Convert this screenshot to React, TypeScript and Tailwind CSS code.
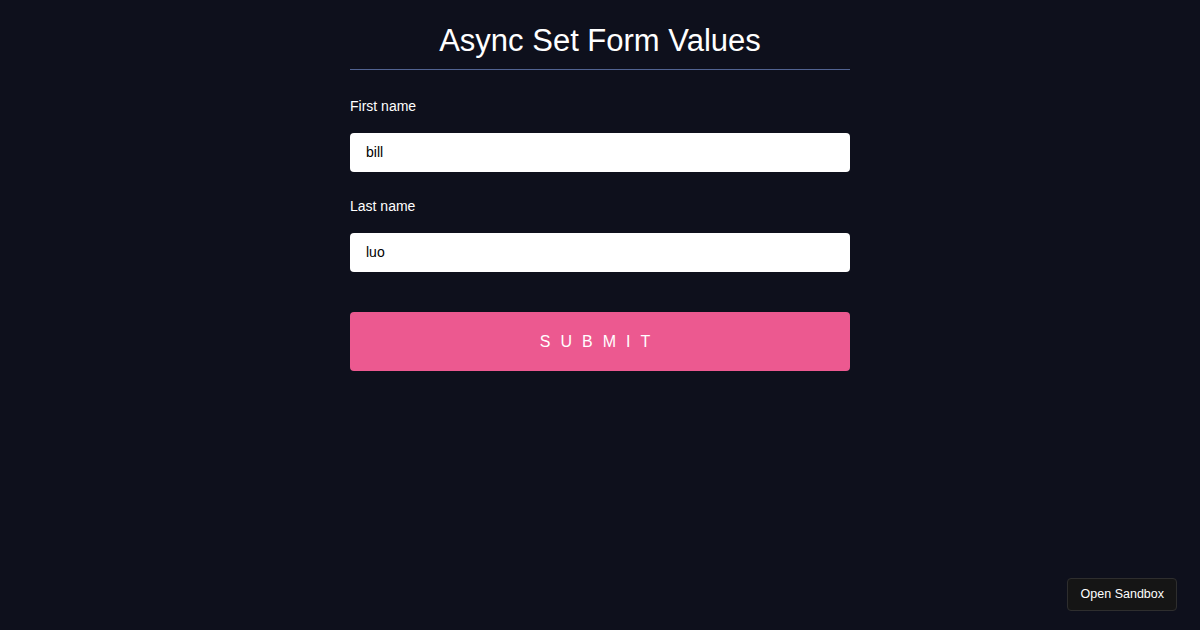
import { useState } from 'react';

const App = () => {
  const [firstName, setFirstName] = useState('bill');
  const [lastName, setLastName] = useState('luo');

  return (
    <div className="min-h-screen bg-[#0e101c] text-white font-['Liberation_Sans',Arial,sans-serif] relative">
      <form className="w-[500px] mx-auto flex flex-col" onSubmit={(e) => e.preventDefault()}>
        <h1 className="mt-[22px] text-[31px] leading-[37px] text-center pb-[10px] border-b border-[#516391]">
          Async Set Form Values
        </h1>
        <label className="mt-[26px] text-[14px] leading-[20px]">First name</label>
        <input
          value={firstName}
          onChange={(e) => setFirstName(e.target.value)}
          className="mt-[17px] h-[39px] rounded-[4px] bg-white text-black px-4 pb-[1px] text-[14px] outline-none"
        />
        <label className="mt-[24px] text-[14px] leading-[20px]">Last name</label>
        <input
          value={lastName}
          onChange={(e) => setLastName(e.target.value)}
          className="mt-[17px] h-[39px] rounded-[4px] bg-white text-black px-4 pb-[1px] text-[14px] outline-none"
        />
        <button
          type="submit"
          className="mt-[40px] h-[59px] rounded-[4px] bg-[#ec5990] text-white text-[16px] tracking-[10px] uppercase"
        >
          Submit
        </button>
      </form>
      <button className="absolute right-[23px] bottom-[19px] h-[33px] pl-[13px] pr-[12px] rounded-[4px] bg-[#151515] border border-[#2e2e2e] text-[12.5px] text-white">
        Open Sandbox
      </button>
    </div>
  );
};

export default App;
